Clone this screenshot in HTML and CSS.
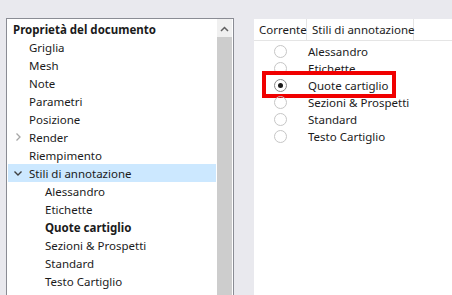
FILE: index.html
```html
<!DOCTYPE html>
<html lang="it">
<head>
<meta charset="utf-8">
<link rel="stylesheet" href="styles.css">
</head>
<body>
<div class="tree-panel">
  <ul class="tree">
    <li class="row lvl0 bold">Proprietà del documento</li>
    <li class="row lvl1"><span class="twisty"></span><span>Griglia</span></li>
    <li class="row lvl1"><span class="twisty"></span><span>Mesh</span></li>
    <li class="row lvl1"><span class="twisty"></span><span>Note</span></li>
    <li class="row lvl1"><span class="twisty"></span><span>Parametri</span></li>
    <li class="row lvl1"><span class="twisty"></span><span>Posizione</span></li>
    <li class="row lvl1"><span class="twisty"><svg width="16" height="16" viewBox="0 0 16 16"><path d="M6.5 4.5 L10 8 L6.5 11.5" fill="none" stroke="#a6a6a6" stroke-width="1.3"/></svg></span><span>Render</span></li>
    <li class="row lvl1"><span class="twisty"></span><span>Riempimento</span></li>
    <li class="row lvl1 selected"><span class="twisty"><svg width="16" height="16" viewBox="0 0 16 16"><path d="M4.5 6.5 L8 10 L11.5 6.5" fill="none" stroke="#404040" stroke-width="1.4"/></svg></span><span>Stili di annotazione</span></li>
    <li class="row lvl2"><span class="twisty"></span><span>Alessandro</span></li>
    <li class="row lvl2"><span class="twisty"></span><span>Etichette</span></li>
    <li class="row lvl2 bold"><span class="twisty"></span><span>Quote cartiglio</span></li>
    <li class="row lvl2"><span class="twisty"></span><span>Sezioni &amp; Prospetti</span></li>
    <li class="row lvl2"><span class="twisty"></span><span>Standard</span></li>
    <li class="row lvl2"><span class="twisty"></span><span>Testo Cartiglio</span></li>
    <li class="row lvl1"><span class="twisty"></span><span>Tratteggi e retini</span></li>
  </ul>
  <div class="scrollbar">
    <div class="sb-up"><svg width="15" height="18" viewBox="0 0 15 18"><path d="M4 12 L7.5 8.5 L11 12" fill="none" stroke="#606060" stroke-width="1.5"/></svg></div>
    <div class="sb-thumb"></div>
  </div>
</div>
<div class="grid-panel">
  <div class="header">
    <div class="hcell c1">Corrente</div>
    <div class="hcell c2">Stili di annotazione</div>
  </div>
  <ul class="list">
    <li class="item"><span class="radio"></span><span>Alessandro</span></li>
    <li class="item"><span class="radio"></span><span>Etichette</span></li>
    <li class="item marked"><span class="radio checked"></span><span>Quote cartiglio</span></li>
    <li class="item"><span class="radio"></span><span>Sezioni &amp; Prospetti</span></li>
    <li class="item"><span class="radio"></span><span>Standard</span></li>
    <li class="item"><span class="radio"></span><span>Testo Cartiglio</span></li>
  </ul>
</div>
</body>
</html>
```
FILE: styles.css
```css
html, body {
  margin: 0;
  padding: 0;
  width: 452px;
  height: 295px;
  overflow: hidden;
}
body {
  background: #e9e9ee;
  display: flex;
  align-items: flex-start;
  padding: 18px 0 0 6px;
  box-sizing: border-box;
  gap: 20px;
  font-family: "Noto Sans", "Open Sans", sans-serif;
  font-size: 11.5px;
  color: #1b1b1b;
}
.tree-panel {
  width: 228px;
  height: 300px;
  box-sizing: border-box;
  border: 1px solid #8a8c94;
  background: #fff;
  display: flex;
  flex-shrink: 0;
  padding-right: 1px;
}
.tree {
  list-style: none;
  margin: 0;
  padding: 1px 1px 0 1px;
  width: 210px;
  box-sizing: border-box;
}
.row {
  height: 18px;
  display: flex;
  align-items: center;
  white-space: nowrap;
}
.row.lvl0 { padding-left: 5px; }
.row.lvl1 { padding-left: 2px; }
.row.lvl2 { padding-left: 18px; }
.twisty {
  width: 16px;
  height: 16px;
  margin-right: 3px;
  flex-shrink: 0;
  display: flex;
}
.bold { font-weight: 700; }
.selected { background: #cce8ff; }
.scrollbar {
  width: 15px;
  display: flex;
  flex-direction: column;
}
.sb-up {
  height: 18px;
  background: #f0f0f0;
  display: flex;
}
.sb-thumb {
  flex: 1;
  background: #cdcdcd;
}
.grid-panel {
  flex: 1;
  height: 300px;
  margin-top: 1px;
  background: #fff;
}
.header {
  display: flex;
  height: 21px;
  border-bottom: 1px solid #e5e5e5;
}
.hcell {
  display: flex;
  align-items: center;
  padding-left: 5px;
  box-sizing: border-box;
  border-right: 1px solid #e5e5e5;
  white-space: nowrap;
}
.c1 { width: 53px; }
.c2 { width: 107px; }
.list {
  list-style: none;
  margin: 0;
  padding: 2px 0 0 0;
}
.item {
  height: 17px;
  display: flex;
  align-items: center;
  padding-left: 20px;
  position: relative;
  white-space: nowrap;
}
.radio {
  width: 13px;
  height: 13px;
  box-sizing: border-box;
  border: 1px solid #c6c6c6;
  border-radius: 50%;
  margin-right: 21px;
  flex-shrink: 0;
  display: flex;
  align-items: center;
  justify-content: center;
}
.radio.checked { border-color: #8a8a8a; }
.radio.checked::after {
  content: "";
  width: 5px;
  height: 5px;
  border-radius: 50%;
  background: #1a1a1a;
}
.marked::before {
  content: "";
  position: absolute;
  left: 8px;
  top: -6px;
  width: 134px;
  height: 27px;
  box-sizing: border-box;
  border: 4px solid #f00000;
}
```
